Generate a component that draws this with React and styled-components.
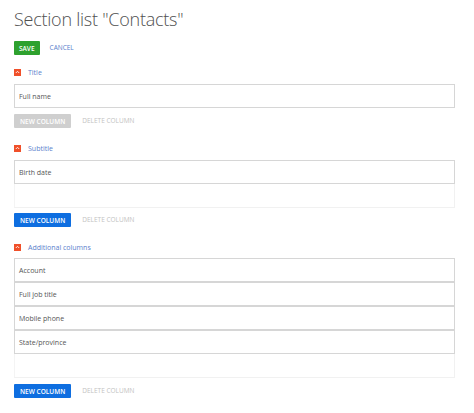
import React from 'react'
import styled, { createGlobalStyle } from 'styled-components'

const GlobalStyle = createGlobalStyle`
  body {
    margin: 0;
    background: #fff;
    font-family: 'Open Sans', 'Noto Sans', sans-serif;
  }
`

const Page = styled.div`
  width: 474px;
  height: 413px;
  padding: 6px 19px 0 14px;
  box-sizing: border-box;
  overflow: hidden;
`

const Heading = styled.h1`
  margin: 0;
  font-size: 18px;
  font-weight: 300;
  color: #505050;
  line-height: 26px;
  letter-spacing: -0.25px;
`

const Toolbar = styled.div`
  display: flex;
  align-items: center;
  gap: 10px;
  margin-top: 9px;
`

const Button = styled.button`
  border: none;
  border-radius: 1px;
  height: 14px;
  padding: 0 ${(p) => (p.wide ? 6 : 5)}px;
  font-family: inherit;
  font-size: 6.5px;
  font-weight: 600;
  text-transform: uppercase;
  color: #fff;
  background: ${(p) =>
    p.variant === 'green' ? '#2ea12e' : p.variant === 'blue' ? '#0e6ee0' : '#cfcfcf'};
  cursor: pointer;
`

const TextButton = styled.button`
  border: none;
  background: none;
  padding: 0;
  font-family: inherit;
  font-size: 6.5px;
  line-height: 14px;
  text-transform: uppercase;
  color: ${(p) => (p.muted ? '#c2c2c2' : '#5a80cc')};
`

const Group = styled.section`
  margin-top: ${(p) => p.top}px;
`

const GroupHead = styled.div`
  display: flex;
  align-items: center;
  gap: 7px;
  height: 8px;
  font-size: 7px;
  color: #5a80cc;
`

const Toggle = styled.span`
  width: 7px;
  height: 7px;
  background: #f0502a;
  display: flex;
  align-items: center;
  justify-content: center;
`

const List = styled.div`
  margin-top: ${(p) => p.gap}px;
  border: 1px solid ${(p) => (p.drop ? '#f1f1f1' : 'transparent')};
  border-top: none;
  border-left-color: ${(p) => (p.drop ? '#f4f4f4' : 'transparent')};
  padding-bottom: ${(p) => (p.drop ? 23 : 0)}px;
  width: 439px;
`

const Row = styled.div`
  height: 22px;
  border: 1px solid #d6d6d6;
  margin: 0 -1px;
  display: flex;
  align-items: center;
  padding-left: 4px;
  font-size: 7px;
  color: #555;
  background: #fff;
`

const Actions = styled.div`
  display: flex;
  align-items: center;
  gap: 11px;
  margin-top: ${(p) => p.gap}px;
`

function Chevron() {
  return (
    <svg width="5" height="4" viewBox="0 0 5 4">
      <path d="M0.8 3 L2.5 1.3 L4.2 3" stroke="#fff" strokeWidth="0.9" fill="none" />
    </svg>
  )
}

function ColumnGroup({ title, rows, top, drop, listGap, actionGap, disabled }) {
  return (
    <Group top={top}>
      <GroupHead>
        <Toggle>
          <Chevron />
        </Toggle>
        {title}
      </GroupHead>
      <List gap={listGap} drop={drop}>
        {rows.map((r) => (
          <Row key={r}>{r}</Row>
        ))}
      </List>
      <Actions gap={actionGap}>
        <Button variant={disabled ? 'gray' : 'blue'} wide>
          New column
        </Button>
        <TextButton muted>Delete column</TextButton>
      </Actions>
    </Group>
  )
}

export default function App() {
  return (
    <Page>
      <GlobalStyle />
      <Heading>Section list "Contacts"</Heading>
      <Toolbar>
        <Button variant="green">Save</Button>
        <TextButton>Cancel</TextButton>
      </Toolbar>
      <ColumnGroup title="Title" rows={['Full name']} top={13} listGap={8} actionGap={5} disabled />
      <ColumnGroup title="Subtitle" rows={['Birth date']} top={16} listGap={8} actionGap={5} drop />
      <ColumnGroup
        title="Additional columns"
        rows={['Account', 'Full job title', 'Mobile phone', 'State/province']}
        top={16}
        listGap={7}
        actionGap={6}
        drop
      />
    </Page>
  )
}
